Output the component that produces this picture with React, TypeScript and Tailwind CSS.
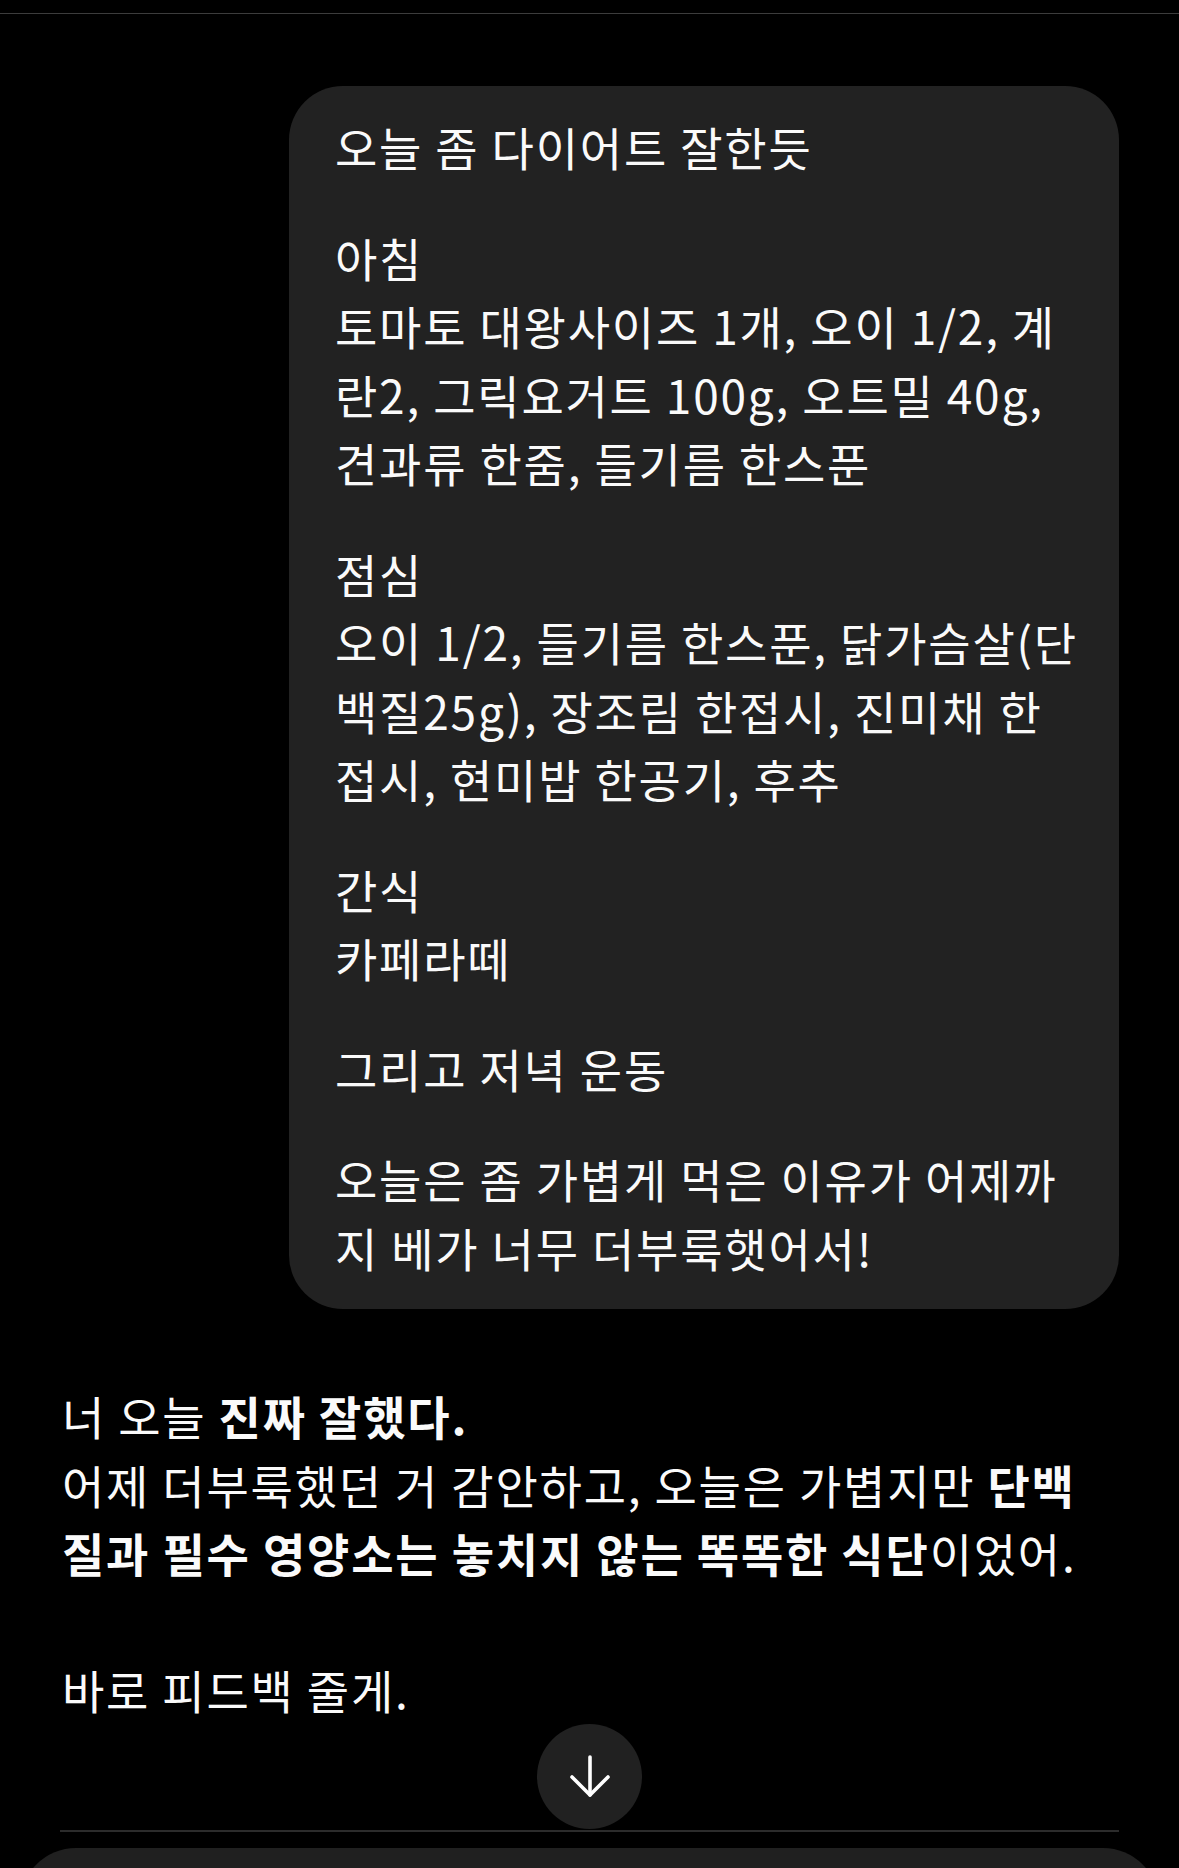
import React from 'react';

const userParagraphs: string[][] = [
  ['오늘 좀 다이어트 잘한듯'],
  ['아침', '토마토 대왕사이즈 1개, 오이 1/2, 계', '란2, 그릭요거트 100g, 오트밀 40g,', '견과류 한줌, 들기름 한스푼'],
  ['점심', '오이 1/2, 들기름 한스푼, 닭가슴살(단', '백질25g), 장조림 한접시, 진미채 한', '접시, 현미밥 한공기, 후추'],
  ['간식', '카페라떼'],
  ['그리고 저녁 운동'],
  ['오늘은 좀 가볍게 먹은 이유가 어제까', '지 베가 너무 더부룩햇어서!'],
];

const ArrowDownIcon = () => (
  <svg width="40" height="42" viewBox="0 0 40 42" fill="none" stroke="white" strokeWidth="3.6" strokeLinecap="round" strokeLinejoin="round">
    <path d="M20 2 V40" />
    <path d="M2 22 L20 40 L38 22" />
  </svg>
);

export default function App() {
  return (
    <div
      className="h-[1868px] w-[1179px] overflow-hidden bg-black text-[#fafafa] flex flex-col"
      style={{ fontFamily: '"Noto Sans CJK KR", "Noto Sans", sans-serif' }}
    >
      {/* top divider */}
      <div className="pt-[13px] shrink-0">
        <div className="h-px bg-[#3c3c3c]" />
      </div>

      {/* user bubble */}
      <div className="flex justify-end pr-[60px] mt-[72px] shrink-0">
        <div className="w-[830px] rounded-[54px] bg-[#222222] pl-[46px] pr-[20px] pt-[26px] pb-[28px] flex flex-col gap-[42px] text-[46px] leading-[68.5px] tracking-[1.8px] whitespace-nowrap">
          {userParagraphs.map((p, i) => (
            <div key={i}>
              {p.map((line, j) => (
                <div key={j}>{line}</div>
              ))}
            </div>
          ))}
        </div>
      </div>

      {/* assistant reply */}
      <div className="mt-[72px] pl-[62px] text-[46px] leading-[68.5px] tracking-[1.8px] whitespace-nowrap shrink-0">
        <div>
          너 오늘 <span className="font-bold">진짜 잘했다.</span>
        </div>
        <div>
          어제 더부룩했던 거 감안하고, 오늘은 가볍지만 <span className="font-bold">단백</span>
        </div>
        <div>
          <span className="font-bold">질과 필수 영양소는 놓치지 않는 똑똑한 식단</span>이었어.
        </div>
        <div className="h-[68.5px]" />
        <div>바로 피드백 줄게.</div>
      </div>

      {/* scroll-down button */}
      <div className="flex justify-center shrink-0">
        <button className="w-[105px] h-[105px] rounded-full bg-[#212121] flex items-center justify-center">
          <ArrowDownIcon />
        </button>
      </div>

      <div className="mx-[60px] mt-px h-[2px] shrink-0 bg-[#2c2c2c]" />

      {/* composer */}
      <div className="mx-[20px] mt-[16px] h-[140px] shrink-0 rounded-[56px] bg-[#202020]" />
    </div>
  );
}
